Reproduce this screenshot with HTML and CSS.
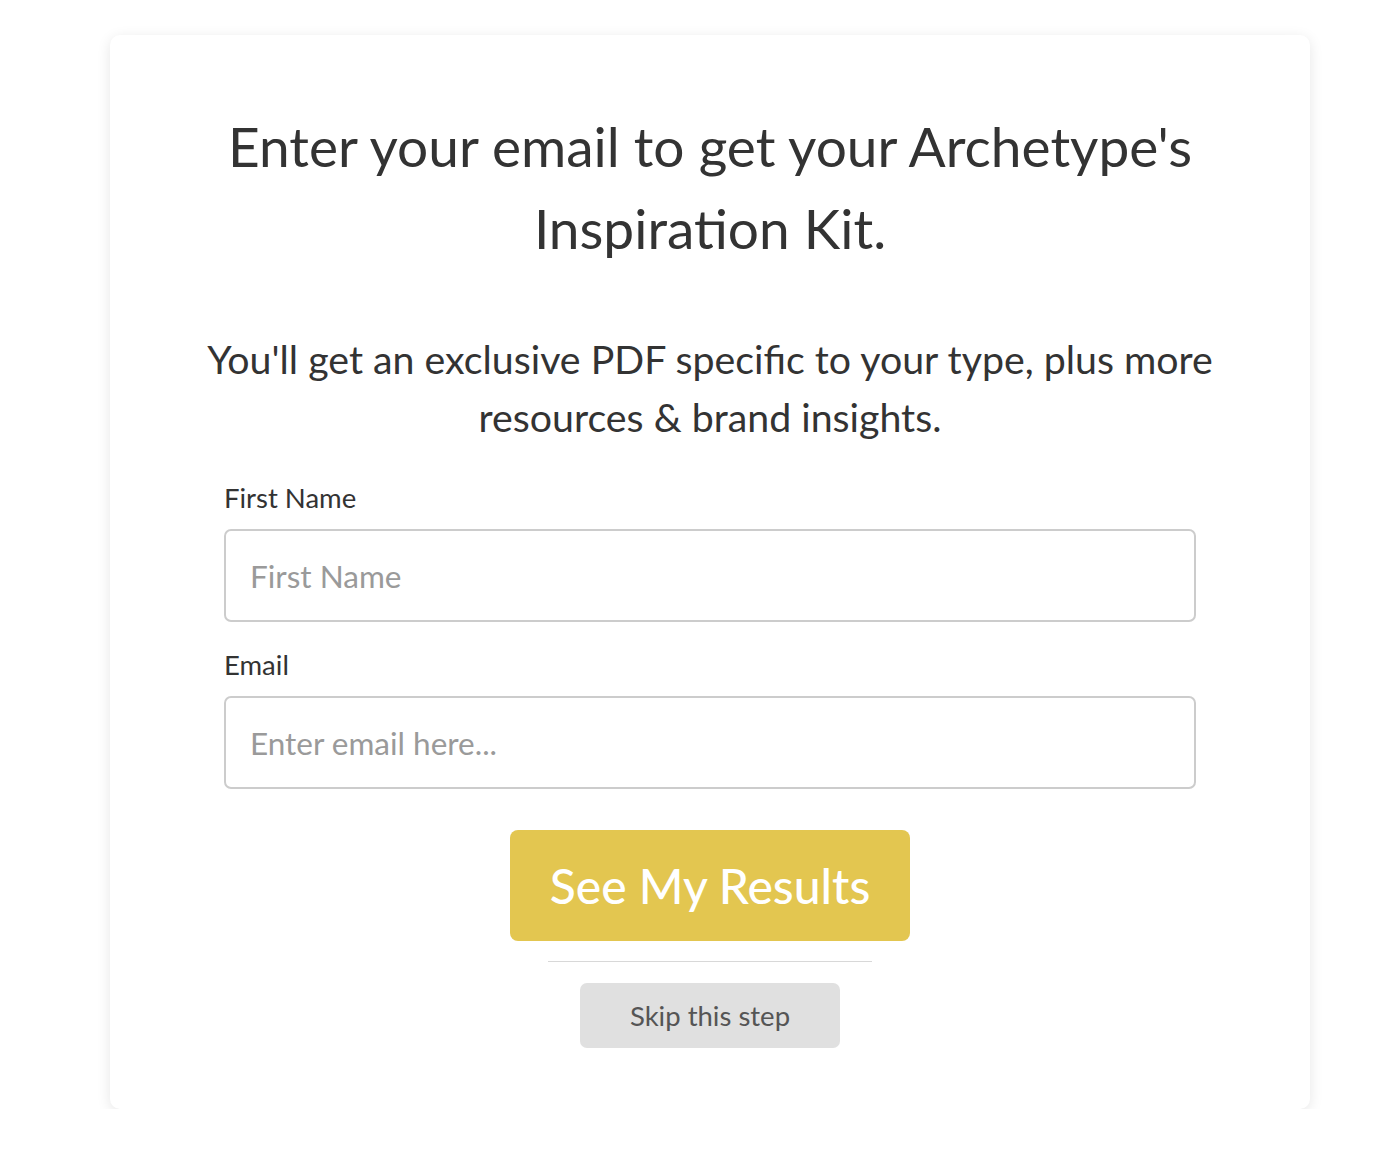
FILE: index.html
```html
<!DOCTYPE html>
<html lang="en">
<head>
    <meta charset="UTF-8">
    <meta name="viewport" content="width=device-width, initial-scale=1.0">
    <title>Inspiration Kit</title>
    <link rel="stylesheet" href="styles.css">
</head>
<body>
    <div class="card">
        <h1 class="title">Enter your email to get your Archetype's Inspiration Kit.</h1>

        <p class="subtitle">You'll get an exclusive PDF specific to your type, plus more resources &amp; brand insights.</p>

        <form class="signup-form" onsubmit="return false">
            <div class="field">
                <label for="first-name">First Name</label>
                <input type="text" id="first-name" placeholder="First Name">
            </div>
            <div class="field">
                <label for="email">Email</label>
                <input type="email" id="email" placeholder="Enter email here...">
            </div>

            <button type="submit" class="btn-results">See My Results</button>
            <hr class="divider">
            <button type="button" class="btn-skip">Skip this step</button>
        </form>
    </div>
</body>
</html>
```

FILE: styles.css
```css
:root {
    --text: #333333;
    --muted: #9a9a9a;
    --border: #cccccc;
    --gold: #e3c650;
    --skip-bg: #e0e0e0;
}

* {
    box-sizing: border-box;
    font-family: 'Lato', 'Open Sans', sans-serif;
}

body {
    margin: 0;
    padding: 35px 0 0;
    background: #ffffff;
    color: var(--text);
}

.card {
    width: 1200px;
    margin: 0 0 0 110px;
    padding: 70px 0 61px;
    background: #ffffff;
    border-radius: 10px;
    box-shadow: 0 3px 14px rgba(0, 0, 0, 0.1);
    display: flex;
    flex-direction: column;
    align-items: center;
    text-align: center;
}

.title {
    margin: 0;
    max-width: 1000px;
    font-size: 55px;
    line-height: 82px;
    font-weight: 400;
}

.subtitle {
    margin: 61px 0 0;
    max-width: 1060px;
    font-size: 39.3px;
    line-height: 58px;
}

.signup-form {
    width: 972px;
    margin-top: 37px;
    display: flex;
    flex-direction: column;
    align-items: center;
}

.field {
    width: 100%;
    text-align: left;
    margin-bottom: 28px;
}

.field label {
    display: block;
    font-size: 27.5px;
    line-height: 30px;
    margin-bottom: 16px;
}

.field input {
    width: 100%;
    height: 93px;
    padding: 0 24px;
    border: 2px solid var(--border);
    border-radius: 7px;
    font-size: 31.5px;
    color: var(--text);
    outline: none;
}

.field input::placeholder {
    color: var(--muted);
}

.btn-results {
    margin-top: 13px;
    width: 400px;
    height: 111px;
    border: none;
    border-radius: 8px;
    background: var(--gold);
    color: #ffffff;
    font-size: 48px;
    font-weight: 500;
    cursor: pointer;
}

.divider {
    width: 324px;
    margin: 20px 0 21px;
    border: none;
    border-top: 1px solid #d8d8d8;
}

.btn-skip {
    width: 260px;
    height: 65px;
    border: none;
    border-radius: 7px;
    background: var(--skip-bg);
    color: #555555;
    font-size: 27.5px;
    cursor: pointer;
}
```
